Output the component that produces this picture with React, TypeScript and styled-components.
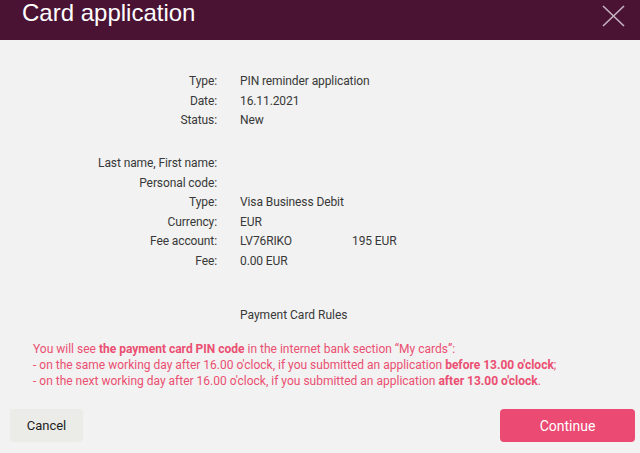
import { Fragment } from "react";
import styled, { createGlobalStyle } from "styled-components";

const GlobalStyle = createGlobalStyle`
  html, body {
    margin: 0;
    padding: 0;
    background: #f1f2f1;
  }
  body {
    font-family: Roboto, "Liberation Sans", Arial, sans-serif;
  }
`;

const Modal = styled.div`
  width: 640px;
  height: 453px;
  display: flex;
  flex-direction: column;
  background: #f1f2f1;
  overflow: hidden;
`;

const Header = styled.div`
  height: 40px;
  flex-shrink: 0;
  background: #4a1334;
  display: flex;
  justify-content: space-between;
  align-items: flex-start;
  padding: 0 15px 0 22px;
`;

const Title = styled.h1`
  margin: 0;
  font-family: "Liberation Sans", Arial, sans-serif;
  font-weight: 400;
  font-size: 24px;
  line-height: 26px;
  color: #ffffff;
`;

const CloseButton = styled.button`
  border: 0;
  background: none;
  padding: 0;
  margin-top: 5px;
  width: 24px;
  height: 24px;
  cursor: pointer;
`;

const Body = styled.div`
  flex: 1;
  display: flex;
  flex-direction: column;
  padding-top: 32px;
`;

const Details = styled.dl<{ $gap?: number }>`
  display: grid;
  grid-template-columns: 217px 1fr;
  column-gap: 23px;
  margin: 0 0 ${(p) => p.$gap ?? 0}px;
  font-size: 12px;
  letter-spacing: -0.1px;
  line-height: 19.5px;
  color: #383838;
`;

const Label = styled.dt`
  text-align: right;
  margin: 0;
`;

const Value = styled.dd`
  margin: 0;
  white-space: nowrap;
`;

const Masked = styled.span`
  display: inline-block;
  width: 60px;
`;

const RulesLink = styled.div`
  padding-left: 240px;
  font-size: 12px;
  line-height: 19.5px;
  color: #383838;
  margin-bottom: 16px;
`;

const Notice = styled.p`
  margin: 0;
  padding-left: 33px;
  font-size: 12px;
  line-height: 16px;
  color: #eb4f72;
  b {
    font-weight: 700;
  }
`;

const Footer = styled.div`
  margin-top: auto;
  display: flex;
  justify-content: space-between;
  padding: 0 5px 11px 10px;
`;

const Button = styled.button<{ $primary?: boolean }>`
  height: 33px;
  border: 0;
  border-radius: 4px;
  font-family: Roboto, "Liberation Sans", Arial, sans-serif;
  font-size: ${(p) => (p.$primary ? 14 : 13)}px;
  width: ${(p) => (p.$primary ? 135 : 73)}px;
  background: ${(p) => (p.$primary ? "#eb4a73" : "#ebebe7")};
  color: ${(p) => (p.$primary ? "#ffffff" : "#222222")};
  cursor: pointer;
`;

const firstGroup = [
  ["Type:", "PIN reminder application"],
  ["Date:", "16.11.2021"],
  ["Status:", "New"],
];

export default function App() {
  return (
    <>
      <GlobalStyle />
      <Modal>
        <Header>
          <Title>Card application</Title>
          <CloseButton aria-label="Close">
            <svg width="24" height="24" viewBox="0 0 24 24">
              <path
                d="M2 1 L23 21 M23 1 L2 21"
                stroke="#c7b3c1"
                strokeWidth="1.6"
                fill="none"
              />
            </svg>
          </CloseButton>
        </Header>
        <Body>
          <Details $gap={23.5}>
            {firstGroup.map(([label, value]) => (
              <Fragment key={label}>
                <Label>{label}</Label>
                <Value>{value}</Value>
              </Fragment>
            ))}
          </Details>
          <Details $gap={34.5}>
            <Label>Last name, First name:</Label>
            <Value />
            <Label>Personal code:</Label>
            <Value />
            <Label>Type:</Label>
            <Value>Visa Business Debit</Value>
            <Label>Currency:</Label>
            <Value>EUR</Value>
            <Label>Fee account:</Label>
            <Value>
              LV76RIKO
              <Masked />
              195 EUR
            </Value>
            <Label>Fee:</Label>
            <Value>0.00 EUR</Value>
          </Details>
          <RulesLink>Payment Card Rules</RulesLink>
          <Notice>
            You will see <b>the payment card PIN code</b> in the internet bank
            section “My cards”:
            <br />- on the same working day after 16.00 o'clock, if you
            submitted an application <b>before 13.00 o'clock</b>;
            <br />- on the next working day after 16.00 o'clock, if you
            submitted an application <b>after 13.00 o'clock</b>.
          </Notice>
          <Footer>
            <Button>Cancel</Button>
            <Button $primary>Continue</Button>
          </Footer>
        </Body>
      </Modal>
    </>
  );
}
